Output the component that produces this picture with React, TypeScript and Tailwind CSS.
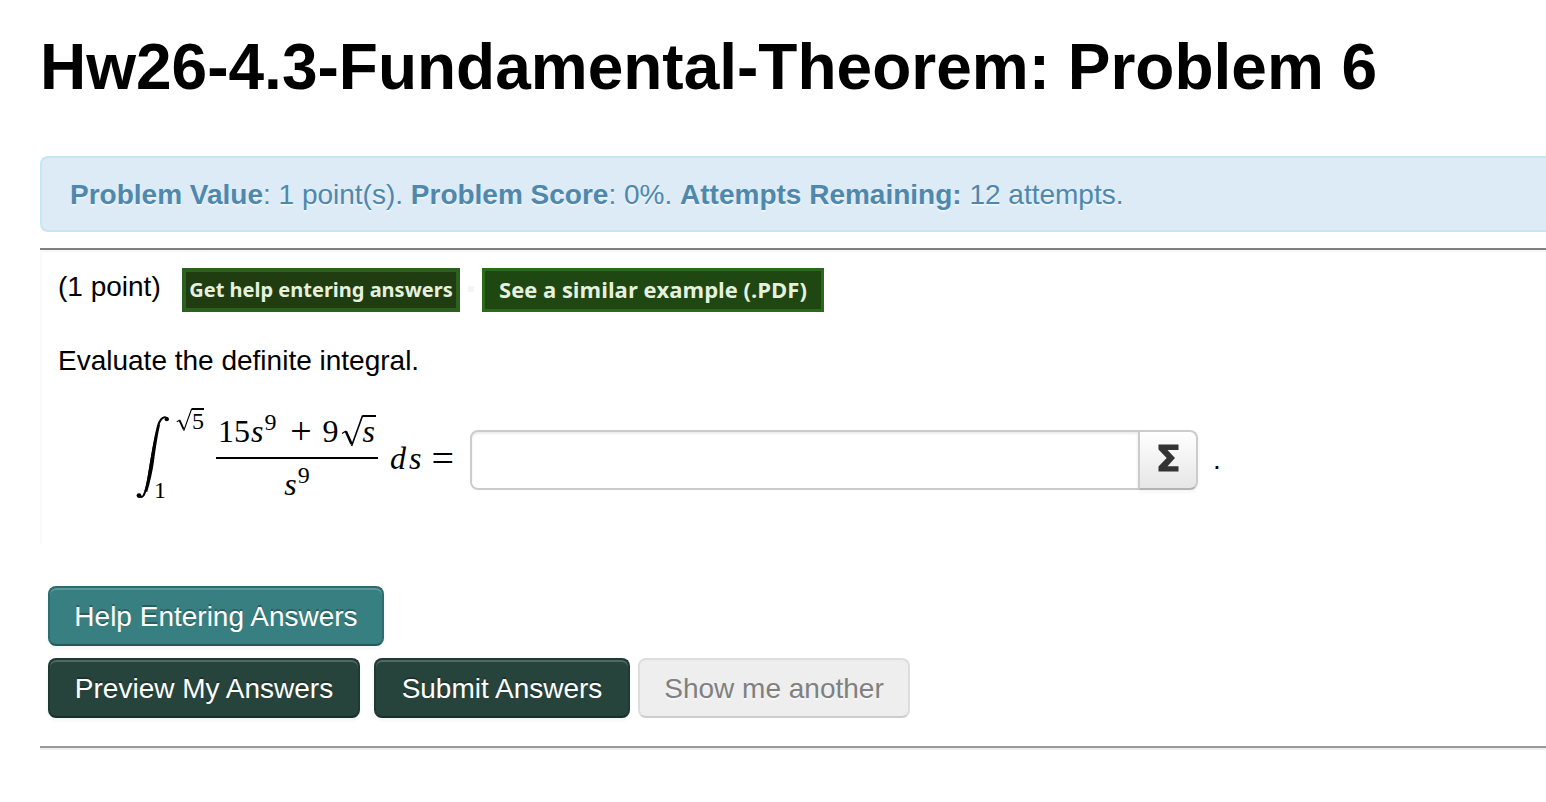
import { type ReactNode } from "react";

function Radical({ children, small = false }: { children: ReactNode; small?: boolean }) {
  return (
    <span className="inline-flex items-start">
      <svg
        aria-hidden="true"
        viewBox="0 0 22 32"
        className={small ? "h-[24px] w-[16px]" : "h-[32px] w-[22px]"}
      >
        <path d="M1 18.5 L5 16" fill="none" stroke="black" strokeWidth="1.4" />
        <path d="M4.8 16.2 L10.6 29" fill="none" stroke="black" strokeWidth="2.6" />
        <path d="M10.6 31 L21.4 1 L22 1" fill="none" stroke="black" strokeWidth="1.6" />
      </svg>
      <span className={small ? "border-t-2 border-black leading-[22px]" : "border-t-2 border-black pr-px leading-[29px]"}>
        {children}
      </span>
    </span>
  );
}

function Power() {
  return (
    <span className="inline-flex">
      <i>s</i>
      <span className="-mt-[9px] ml-px text-[24px]">9</span>
    </span>
  );
}

function Integral() {
  return (
    <div
      role="math"
      aria-label="Integral from 1 to the square root of 5"
      className="flex items-center pb-1 font-['Liberation_Serif',serif] text-[32px] text-black"
    >
      <svg aria-hidden="true" viewBox="0 0 34 88" className="h-[88px] w-[34px]">
        <path
          d="M32 5.5 C30 2 26 2.4 23.2 8.5 C20.5 14.5 18 30 15 49 C12.5 65 10.5 77 7.5 81.5 C6 83.5 4 83.5 3 81.5"
          fill="none"
          stroke="black"
          strokeWidth="2"
        />
        <path
          d="M21.6 12 C18.1 24 15.6 38 13.1 53 C11.6 63 10.4 71 8.6 77 L11.2 78 C14.2 68 16.4 58 17.9 48 C19.9 33 21.9 20 24.2 10 Z"
          fill="black"
        />
        <circle cx="30.8" cy="5.2" r="2.1" fill="black" />
        <circle cx="3" cy="81.6" r="2.4" fill="black" />
      </svg>
      <div className="flex h-[100px] w-[46px] flex-col justify-between text-[24px] leading-6">
        <span className="flex pl-[6px]">
          <Radical small>5</Radical>
        </span>
        <span className="-ml-4 pb-[6px]">1</span>
      </div>
      <div className="flex flex-col items-center">
        <div className="flex h-[50px] w-[162px] items-center justify-between border-b-2 border-black px-[2px] pb-1 leading-10 whitespace-nowrap">
          <span className="flex gap-px">15<Power /></span>
          <span className="pl-[3px] text-[38px]">+</span>
          <span className="flex items-center gap-[2px]">
            9<Radical><i>s</i></Radical>
          </span>
        </div>
        <div className="h-[48px] pt-[5px] leading-10"><Power /></div>
      </div>
      <div className="ml-3 flex items-center gap-[10px] pr-4 leading-10">
        <span className="flex gap-[3px] pb-px"><i>d</i><i>s</i></span>
        <span className="pt-px text-[40px]">=</span>
      </div>
    </div>
  );
}

const button =
  "h-[60px] rounded-[8px] border-2 px-[22px] pt-px text-[28px] leading-10 whitespace-nowrap";
const raised =
  "text-white shadow-[inset_0_2px_0_rgba(255,255,255,0.2),0_2px_4px_rgba(0,0,0,0.05)] [text-shadow:0_-2px_0_rgba(0,0,0,0.25)]";

export default function App() {
  return (
    <main className="overflow-x-hidden bg-white pb-12 pl-10 font-['Liberation_Sans',Arial,sans-serif] text-[28px] leading-10 text-black">
      <h1 className="pt-[27px] text-[64px] leading-[80px] font-bold whitespace-nowrap">
        Hw26-4.3-Fundamental-Theorem: Problem 6
      </h1>

      <div className="mt-[49px] rounded-l-[8px] border-2 border-r-0 border-[#c3e8f0] bg-[#ddebf6] pt-[17px] pb-[15px] pl-7 text-[#4f88ad] [text-shadow:0_2px_0_rgba(255,255,255,0.5)]">
        <b>Problem Value</b>: 1 point(s). <b>Problem Score</b>: 0%. <b>Attempts Remaining:</b> 12 attempts.
      </div>

      <section className="mt-4 border-t-2 border-[#808080]">
        <div className="border-l-2 border-[#fafafa] pt-[18px] pb-8 pl-4 shadow-[inset_0_2px_2px_rgba(0,0,0,0.04)]">
          <div className="flex h-11 items-stretch">
            <span className="w-[124px] leading-[38px]">(1 point)</span>
            <a
              href="#help"
              className="flex w-[278px] items-center justify-center border-4 border-[#2b611e] bg-[#1f3d11] font-['Noto_Sans',sans-serif] text-[20px] font-bold whitespace-nowrap text-[#e6f0df]"
            >
              Get help entering answers
            </a>
            <span className="mx-2 mt-[18px] size-[6px] bg-[#f5f5f5]" />
            <a
              href="#example"
              className="flex w-[342px] items-center justify-center border-[3px] border-[#2b6a1a] bg-[#1f4711] pb-[2px] font-['Open_Sans',sans-serif] text-[22px] font-bold whitespace-nowrap text-[#e6f0df]"
            >
              See a similar example (.PDF)
            </a>
          </div>

          <p className="mt-[29px]">Evaluate the definite integral.</p>

          <div className="mt-[27px] flex items-center pl-[78px]">
            <Integral />
            <div className="flex h-[60px]">
              <input
                type="text"
                aria-label="Answer"
                className="w-[670px] rounded-l-[8px] border-2 border-[#cccccc] bg-white px-3 shadow-[inset_0_2px_2px_rgba(0,0,0,0.075)] outline-none"
              />
              <button
                type="button"
                aria-label="Equation editor"
                className="-ml-0.5 flex w-[60px] items-center justify-center rounded-r-[8px] border-2 border-[#cccccc] border-b-[#b3b3b3] bg-linear-to-b from-white to-[#e6e6e6] pb-1 shadow-[0_2px_4px_rgba(0,0,0,0.05)]"
              >
                <svg aria-hidden="true" viewBox="0 0 21 28" className="h-7 w-[21px]">
                  <path d="M0.5 0.5 H20.5 V6 H9.5 L17 14 L9.5 22.3 H20.5 V27.5 H0.5 V22.5 L8.7 14 L0.5 5.5 Z" fill="#333333" />
                </svg>
              </button>
            </div>
            <span className="pl-[15px]">.</span>
          </div>
        </div>

        <div className="pt-[42px] pl-2">
          <button type="button" className={`${button} ${raised} min-w-[336px] border-[#2d6c70] border-b-[#24585b] bg-[#387f82]`}>
            Help Entering Answers
          </button>
          <div className="mt-3 flex">
            <button type="button" className={`${button} ${raised} mr-[14px] min-w-[312px] border-[#1f3a33] border-b-[#182e28] bg-[#26443c]`}>
              Preview My Answers
            </button>
            <button type="button" className={`${button} ${raised} mr-2 min-w-[256px] border-[#1f3a33] border-b-[#182e28] bg-[#26443c]`}>
              Submit Answers
            </button>
            <button
              type="button"
              disabled
              className={`${button} min-w-[272px] border-[#dddddd] border-b-[#cccccc] bg-[#eeeeee] text-[#808080] [text-shadow:0_2px_0_rgba(255,255,255,0.5)]`}
            >
              Show me another
            </button>
          </div>
        </div>
      </section>

      <hr className="mt-7 h-1 border-t-2 border-b-2 border-t-[#999999] border-b-[#eeeeee]" />
    </main>
  );
}
